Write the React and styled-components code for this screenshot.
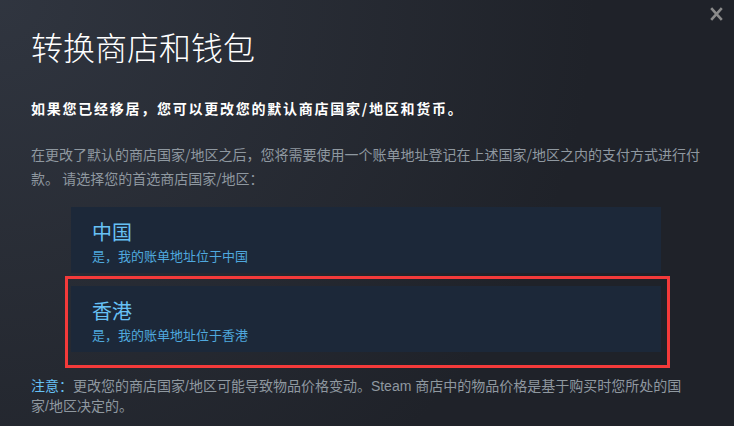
import React from "react";
import styled, { createGlobalStyle } from "styled-components";

const Global = createGlobalStyle`
  html, body { margin: 0; padding: 0; background: #1f2229; }
  body { font-family: "Liberation Sans", "Noto Sans CJK SC", sans-serif; }
  * { box-sizing: border-box; }
`;

const Modal = styled.div`
  position: relative;
  width: 734px;
  height: 426px;
  overflow: hidden;
  padding: 26px 31px 0 31px;
  background:
    radial-gradient(circle at 0% 0%, rgba(62, 69, 82, 0.55) 0%, rgba(62, 69, 82, 0) 70%),
    #1f2229;
  display: flex;
  flex-direction: column;
`;

const Close = styled.button`
  position: absolute;
  top: 7px;
  right: 11px;
  width: 13px;
  height: 14px;
  padding: 0;
  border: 0;
  background: none;
  display: flex;
  align-items: center;
  justify-content: center;
`;

const Title = styled.h1`
  margin: 0;
  font-family: "Noto Sans CJK SC", sans-serif;
  font-weight: 300;
  font-size: 32px;
  line-height: 40px;
  color: #ffffff;
`;

const Lead = styled.p`
  margin: 32px 0 0 0;
  font-family: "Noto Sans CJK SC", sans-serif;
  font-weight: 700;
  font-size: 14px;
  line-height: 20px;
  letter-spacing: 1.75px;
  color: #ffffff;
`;

const Body = styled.p`
  margin: 24px 0 0 0;
  font-family: "Noto Sans CJK SC", sans-serif;
  font-size: 14px;
  line-height: 24px;
  color: #8f98a0;
`;

const Options = styled.div`
  margin: 17px 0 0 40px;
  width: 590px;
  display: flex;
  flex-direction: column;
  gap: 13px;
`;

const Option = styled.div`
  position: relative;
  height: 66px;
  padding: 10px 21px 0 21px;
  background: #1c2839;
  display: flex;
  flex-direction: column;
  cursor: pointer;
`;

const OptionName = styled.div`
  font-family: "Noto Sans CJK SC", sans-serif;
  font-size: 20px;
  line-height: 29px;
  color: #67c1f5;
`;

const OptionSub = styled.div`
  font-family: "Noto Sans CJK SC", sans-serif;
  font-size: 13px;
  line-height: 19px;
  color: #4fa8de;
`;

const Highlight = styled.div`
  position: absolute;
  left: -6px;
  right: -9px;
  top: -10px;
  bottom: -16px;
  border: 3px solid #f43a3a;
  pointer-events: none;
`;

const Note = styled.p`
  margin: 24px 0 0 0;
  max-width: 658px;
  font-family: "Liberation Sans", "Noto Sans CJK SC", sans-serif;
  font-size: 14px;
  line-height: 20px;
  color: #8f98a0;
`;

const NoteLabel = styled.span`
  color: #67c1f5;
`;

const options = [
  { name: "中国", sub: "是，我的账单地址位于中国" },
  { name: "香港", sub: "是，我的账单地址位于香港", highlight: true },
];

export default function App() {
  return (
    <>
      <Global />
      <Modal>
        <Close aria-label="close">
          <svg width="13" height="14" viewBox="0 0 13 14">
            <path d="M1.2 1.2 L11.8 12.8 M11.8 1.2 L1.2 12.8" stroke="#8a8a8a" strokeWidth="2.6" />
          </svg>
        </Close>
        <Title>转换商店和钱包</Title>
        <Lead>如果您已经移居，您可以更改您的默认商店国家/地区和货币。</Lead>
        <Body>
          在更改了默认的商店国家/地区之后，您将需要使用一个账单地址登记在上述国家/地区之内的支付方式进行付款。 请选择您的首选商店国家/地区：
        </Body>
        <Options>
          {options.map((o) => (
            <Option key={o.name}>
              <OptionName>{o.name}</OptionName>
              <OptionSub>{o.sub}</OptionSub>
              {o.highlight && <Highlight />}
            </Option>
          ))}
        </Options>
        <Note>
          <NoteLabel>注意：</NoteLabel>更改您的商店国家/地区可能导致物品价格变动。Steam 商店中的物品价格是基于购买时您所处的国家/地区决定的。
        </Note>
      </Modal>
    </>
  );
}
